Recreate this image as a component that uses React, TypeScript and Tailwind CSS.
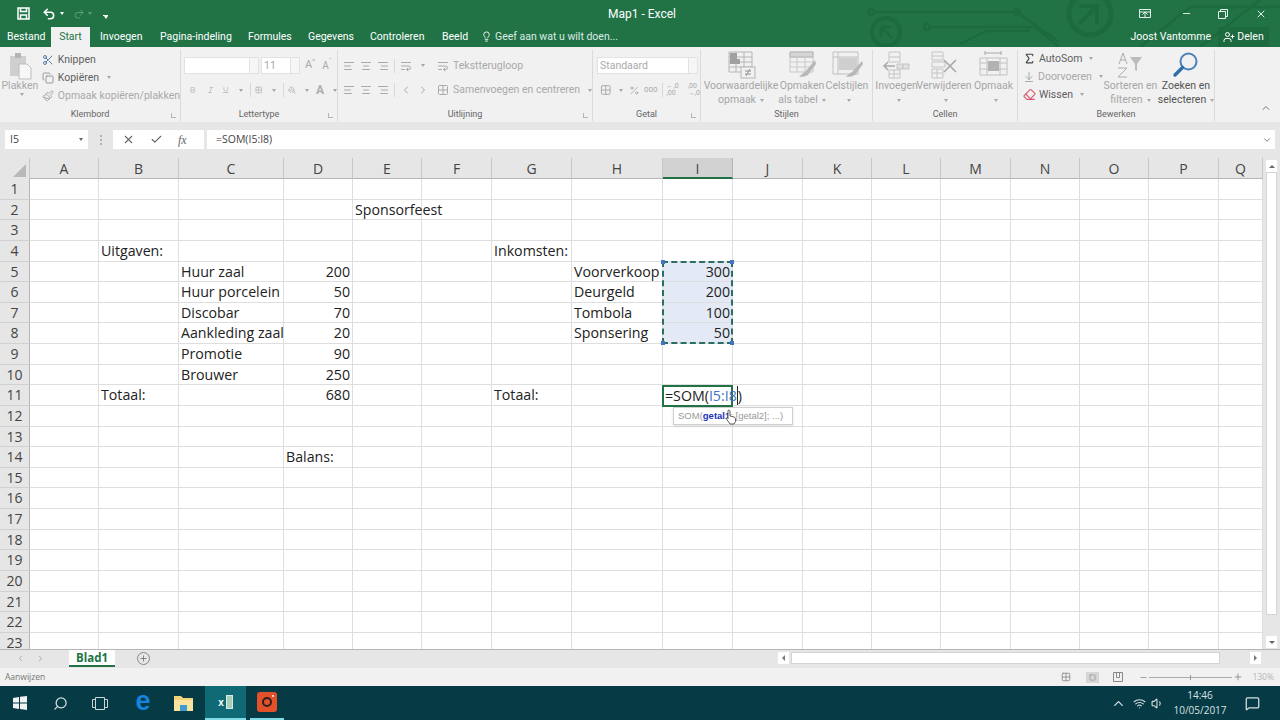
import React from "react"
import { Scissors, Copy, Paintbrush, X, Check, ChevronDown, ChevronUp, Plus, Search, Lightbulb, Minus, Square, Wifi, Volume1, MessageSquare, Bold, Italic, Underline, Sigma, ArrowDownToLine, Eraser, UserPlus, Undo2, Redo2, ChevronLeft, ChevronRight, Grid2x2, PaintBucket, AlignLeft, AlignCenter, AlignRight, WrapText, Percent } from "lucide-react"

const COLS = ["A", "B", "C", "D", "E", "F", "G", "H", "I", "J", "K", "L", "M", "N", "O", "P", "Q"]

// celinhoud: [tekst, rechts uitgelijnd]
const CELLS: Record<string, [string, boolean?]> = {
  E2: ["Sponsorfeest"],
  B4: ["Uitgaven:"], G4: ["Inkomsten:"],
  C5: ["Huur zaal"], D5: ["200", true], H5: ["Voorverkoop"], I5: ["300", true],
  C6: ["Huur porcelein"], D6: ["50", true], H6: ["Deurgeld"], I6: ["200", true],
  C7: ["Discobar"], D7: ["70", true], H7: ["Tombola"], I7: ["100", true],
  C8: ["Aankleding zaal"], D8: ["20", true], H8: ["Sponsering"], I8: ["50", true],
  C9: ["Promotie"], D9: ["90", true],
  C10: ["Brouwer"], D10: ["250", true],
  B11: ["Totaal:"], D11: ["680", true], G11: ["Totaal:"],
  D14: ["Balans:"],
}

const ROWS = Array.from({ length: 23 }, (_, i) => i + 1)

function TableIcon({ kind }: { kind: string }) {
  // grote lintpictogrammen, lichtgrijs want uitgeschakeld
  return (
    <svg width="34" height="30" viewBox="0 0 34 30" fill="none" stroke="#b5b5b5" strokeWidth="1">
      {kind === "cond" && (
        <>
          <path d="M5 2h23v20H5zM5 7h23M5 12h23M5 17h23M12 2v20M20 2v20" />
          <path d="M6 3h7v6H6zM6 9h10v5H6z" fill="#a0a0a0" stroke="none" />
          <rect x="17" y="17" width="14" height="11" fill="#f1f1f1" />
          <path d="M21 21h6M21 24h6M26 19l-4 7" stroke="#909090" />
        </>
      )}
      {kind === "tabel" && (
        <>
          <path d="M5 2h23v20H5zM5 7h23M5 12h23M5 17h23M12 2v20M20 2v20" stroke="#c8c8c8" />
          <path d="M5 2h23v5H5z" fill="#d5d5d5" />
          <path d="M30 10L20 22l3 3 8-11zM20 22c-3 1-4 3-6 5 4 0 7-1 9-2z" fill="#b8b8b8" stroke="none" />
        </>
      )}
      {kind === "cel" && (
        <>
          <path d="M3 2h25v22H3zM3 7h25M8 2v22" stroke="#c0c0c0" />
          <rect x="9" y="8" width="18" height="12" fill="#cfcfcf" stroke="none" />
          <path d="M32 11L22 22l3 3 8-11zM22 22c-3 1-4 3-6 5 4 0 7-1 9-2z" fill="#b8b8b8" stroke="none" />
        </>
      )}
      {kind === "invoegen" && (
        <>
          <path d="M9 2h11v10H9zM9 7h11M9 20h11v8H9zM14 20v8M9 24h11" stroke="#c4c4c4" />
          <path d="M17 14h12v5H17zM23 14v5" stroke="#c4c4c4" fill="#e0e0e0" />
          <path d="M15 16H4M8 12l-4 4 4 4" stroke="#aaa" strokeWidth="1.5" />
        </>
      )}
      {kind === "verwijderen" && (
        <>
          <path d="M5 2h11v8H5zM5 6h11M5 19h11v9H5zM10 19v9M5 23h11M5 12h13v5H5z" stroke="#c4c4c4" />
          <path d="M17 10l12 12M29 10L17 22" stroke="#a8a8a8" strokeWidth="1.6" />
        </>
      )}
      {kind === "opmaak" && (
        <>
          <path d="M3 8h27v17H3zM3 13h27M3 19h27M10 8v17M23 8v17" stroke="#c0c0c0" />
          <rect x="11" y="11" width="11" height="10" fill="#b2b2b2" stroke="none" />
          <path d="M8 3h16M8 1v4M24 1v4" stroke="#a8a8a8" />
        </>
      )}
    </svg>
  )
}

function Tiny() {
  return <span className="inline-block w-0 h-0 border-x-[2.5px] border-x-transparent border-t-[3px] border-t-[#a8a8a8] ml-[4px] align-middle" />
}

function LargeBtn({ kind, l1, l2, w }: { kind: string; l1: string; l2: string; w: string }) {
  return (
    <div className={`${w} flex flex-col items-center text-[10.5px] leading-[14px] text-[#a6a6a6]`}>
      <div className="h-[29px] flex items-center justify-center">
        <TableIcon kind={kind} />
      </div>
      <span className="whitespace-nowrap">{l1}</span>
      <span className="whitespace-nowrap">{l2}<Tiny /></span>
    </div>
  )
}

function Group({ label, w, launcher, children }: { label: string; w: string; launcher?: boolean; children: React.ReactNode }) {
  return (
    <div className={`${w} h-[71px] shrink-0 flex flex-col border-r border-[#dadada] relative`}>
      <div className="flex-1 min-h-0">{children}</div>
      <div className="h-[14px] text-center text-[9px] leading-[14px] text-[#666666]">{label}</div>
      {launcher && <div className="absolute right-[4px] bottom-[3px] w-[5px] h-[5px] border-l border-b border-[#b4b4b4]" />}
    </div>
  )
}

function Ribbon() {
  return (
    <div className="h-[75px] bg-[#f1f1f1] flex pt-[3px] text-[10.5px] text-[#a9a9a9] font-['Roboto',sans-serif] shrink-0">
      <Group label="Klembord" w="w-[181px]" launcher>
        <div className="flex">
          <div className="w-[40px] flex flex-col items-center">
            <svg width="24" height="28" viewBox="0 0 24 28" className="mt-[2px]">
              <path d="M2 4h16v20H2z" fill="#cfcfcf" />
              <path d="M7 1h6v5H7z" fill="#b5b5b5" />
              <path d="M11 12h8l4 4v11H11z" fill="#f7f7f7" stroke="#bdbdbd" />
            </svg>
            <span className="leading-[14px] -mt-[1px]">Plakken</span>
            <Tiny />
          </div>
          <div className="flex flex-col pl-[2px] pt-[2px] text-[#5f5f5f] gap-[3px]">
            <div className="flex items-center h-[15px] gap-[4px]"><Scissors size={12} className="text-[#5b7fa8]" /><span>Knippen</span></div>
            <div className="flex items-center h-[15px] gap-[4px]"><Copy size={12} className="text-[#9a9a9a]" /><span>Kopiëren</span><Tiny /></div>
            <div className="flex items-center h-[16px] gap-[4px] text-[#a9a9a9]"><Paintbrush size={12} /><span className="whitespace-nowrap">Opmaak kopiëren/plakken</span></div>
          </div>
        </div>
      </Group>

      <Group label="Lettertype" w="w-[157px]" launcher>
        <div className="pl-[3px] pt-[7px]">
          <div className="flex items-center h-[17px]">
            <div className="w-[66px] h-[17px] bg-white border border-[#e2e2e2]" />
            <div className="w-[9px] h-[17px] bg-[#f6f6f6] border-y border-r border-[#e2e2e2]" />
            <div className="w-[30px] h-[17px] ml-[2px] bg-white border border-[#e2e2e2] leading-[15px] pl-[2px]">11</div>
            <div className="w-[9px] h-[17px] bg-[#f6f6f6] border-y border-r border-[#e2e2e2]" />
            <span className="ml-[5px] text-[11px]">A</span><span className="text-[7px] -mt-[6px]">^</span>
            <span className="ml-[7px] text-[10px]">A</span><span className="text-[7px] -mt-[6px]">ˇ</span>
          </div>
          <div className="flex items-center h-[16px] mt-[8px] pl-[5px] gap-[5px] text-[#adadad]">
            <Bold size={12} /><Italic size={12} className="ml-[5px]" /><Underline size={12} className="ml-[3px]" /><Tiny />
            <span className="w-px h-[14px] bg-[#d8d8d8] ml-[2px]" />
            <Grid2x2 size={12} /><Tiny />
            <span className="w-px h-[14px] bg-[#d8d8d8] ml-[2px]" />
            <PaintBucket size={12} /><Tiny />
            <span className="font-bold text-[12px] ml-[2px]">A</span><Tiny />
          </div>
        </div>
      </Group>

      <Group label="Uitlijning" w="w-[255px]" launcher>
        <div className="flex pl-[3px] pt-[7px]">
          <div className="w-[92px] flex flex-col">
            <div className="flex items-center h-[17px] gap-[5px] pl-[2px]">
              <AlignLeft size={12} /><AlignCenter size={12} /><AlignRight size={12} />
              <span className="w-px h-[14px] bg-[#d8d8d8]" />
              <WrapText size={12} /><Tiny />
            </div>
            <div className="flex items-center h-[16px] gap-[5px] pl-[2px] mt-[8px]">
              <AlignLeft size={12} /><AlignCenter size={12} /><AlignRight size={12} />
              <span className="w-px h-[14px] bg-[#d8d8d8]" />
              <ChevronLeft size={12} /><ChevronRight size={12} />
            </div>
          </div>
          <div className="flex flex-col">
            <div className="flex items-center h-[17px] gap-[4px] pl-[8px]"><WrapText size={12} /><span className="whitespace-nowrap">Tekstterugloop</span></div>
            <div className="flex items-center h-[16px] gap-[4px] pl-[8px] mt-[8px]"><Grid2x2 size={12} /><span className="whitespace-nowrap">Samenvoegen en centreren</span><Tiny /></div>
          </div>
        </div>
      </Group>

      <Group label="Getal" w="w-[108px]" launcher>
        <div className="pl-[4px] pt-[7px]">
          <div className="w-[101px] h-[17px] bg-white border border-[#e2e2e2] leading-[15px] pl-[2px] flex justify-between">
            Standaard<span className="w-[9px] bg-[#f6f6f6] border-l border-[#e2e2e2]" />
          </div>
          <div className="flex items-center h-[16px] mt-[8px] pl-[3px] gap-[4px]">
            <Grid2x2 size={12} /><Tiny />
            <Percent size={11} className="ml-[2px]" />
            <span className="text-[8px]">000</span>
            <span className="w-px h-[14px] bg-[#d8d8d8]" />
            <span className="text-[7px] leading-[7px] w-[18px]">←,0<br />,00</span>
            <span className="text-[7px] leading-[7px]">,00<br />→,0</span>
          </div>
        </div>
      </Group>

      <Group label="Stijlen" w="w-[172px]">
        <div className="flex pl-[2px]">
          <LargeBtn kind="cond" l1="Voorwaardelijke" l2="opmaak" w="w-[76px]" />
          <LargeBtn kind="tabel" l1="Opmaken" l2="als tabel" w="w-[46px]" />
          <LargeBtn kind="cel" l1="Celstijlen" l2="" w="w-[44px]" />
        </div>
      </Group>

      <Group label="Cellen" w="w-[145px]">
        <div className="flex pl-[2px]">
          <LargeBtn kind="invoegen" l1="Invoegen" l2="" w="w-[44px]" />
          <LargeBtn kind="verwijderen" l1="Verwijderen" l2="" w="w-[52px]" />
          <LargeBtn kind="opmaak" l1="Opmaak" l2="" w="w-[48px]" />
        </div>
      </Group>

      <Group label="Bewerken" w="w-[197px]">
        <div className="flex pl-[5px]">
          <div className="w-[80px] flex flex-col pt-[1px] gap-[3px] text-[#5f5f5f]">
            <div className="flex items-center h-[15px] gap-[3px]"><Sigma size={13} className="text-[#444]" /><span>AutoSom</span><Tiny /></div>
            <div className="flex items-center h-[15px] gap-[3px] text-[#a9a9a9]"><ArrowDownToLine size={12} /><span>Doorvoeren</span><Tiny /></div>
            <div className="flex items-center h-[15px] gap-[3px]"><Eraser size={13} className="text-[#d9566e]" /><span>Wissen</span><Tiny /></div>
          </div>
          <div className="w-[56px] flex flex-col items-center leading-[14px] text-[#a6a6a6]">
            <div className="h-[29px] flex items-center justify-center">
              <svg width="30" height="28" viewBox="0 0 30 28" fill="none" stroke="#adadad">
                <path d="M4 13l4-11 4 11M5.500 9h5M3 17h9l-9 9h9" />
                <path d="M15 6h12l-5 7v7l-2-1v-6z" fill="#bcbcbc" stroke="none" />
              </svg>
            </div>
            <span className="whitespace-nowrap">Sorteren en</span>
            <span className="whitespace-nowrap">filteren<Tiny /></span>
          </div>
          <div className="w-[56px] flex flex-col items-center leading-[14px] text-[#555555]">
            <div className="h-[29px] flex items-center justify-center">
              <svg width="28" height="28" viewBox="0 0 28 28" fill="none">
                <circle cx="16.500" cy="10.500" r="8" stroke="#4a7fb8" strokeWidth="2" />
                <path d="M10.500 16.500L3 24" stroke="#2f6cab" strokeWidth="3.400" strokeLinecap="round" />
              </svg>
            </div>
            <span className="whitespace-nowrap">Zoeken en</span>
            <span className="whitespace-nowrap">selecteren<Tiny /></span>
          </div>
        </div>
      </Group>

      <div className="flex-1 flex items-end justify-end pr-[8px] pb-[8px]">
        <ChevronUp size={12} className="text-[#777]" />
      </div>
    </div>
  )
}

function TitleBar() {
  return (
    <div className="h-[47px] bg-[#217346] relative text-white shrink-0 overflow-hidden font-['Roboto',sans-serif]">
      {/* printplaat-motief van het Office-thema */}
      <svg width="430" height="47" viewBox="0 0 430 47" fill="none" stroke="#1c6a3f" strokeWidth="2.400" className="absolute right-0 top-0">
        <circle cx="21" cy="12" r="3" />
        <path d="M24 12h143l42 30" />
        <circle cx="167" cy="12" r="3" />
        <circle cx="77" cy="27" r="3" />
        <path d="M80 27h105l24 20M110 44l26-13h44" />
        <circle cx="36" cy="32" r="14" strokeWidth="4" />
        <path d="M31 27h10M31 27v10M32 28l10 10" strokeWidth="3" />
        <circle cx="240" cy="14" r="21" strokeWidth="5" />
        <path d="M230 5h18v18M248 5l-18 18" strokeWidth="4" transform="translate(-1 1)" />
        <path d="M290 47l50-40h90M350 47L410 0" />
      </svg>
      <div className="relative h-[27px] flex items-center">
        <div className="flex-1 flex items-center pl-[17px]">
          <svg width="13" height="13" viewBox="0 0 13 13" fill="none" stroke="#fff" strokeWidth="1.500">
            <path d="M1 1h11v11H1zM3.500 1v3.500h6V1M3.500 12V8h6v4" />
          </svg>
          <Undo2 size={14} className="ml-[12px]" strokeWidth={2.600} />
          <span className="w-0 h-0 border-x-[2px] border-x-transparent border-t-[3px] border-t-white ml-[4px]" />
          <Redo2 size={12} className="ml-[9px] text-[#5d9c79]" />
          <span className="w-0 h-0 border-x-[2px] border-x-transparent border-t-[3px] border-t-[#5d9c79] ml-[3px]" />
          <span className="w-[5px] h-[5px] border-b border-white ml-[11px] relative">
            <span className="absolute left-[.5px] top-[5px] w-0 h-0 border-x-[2px] border-x-transparent border-t-[3px] border-t-white" />
          </span>
        </div>
        <div className="text-[12px]">Map1 - Excel</div>
        <div className="flex-1 flex items-center justify-end pr-[13px] text-[#e8f2ec]">
          <svg width="12" height="10" viewBox="0 0 12 10" fill="none" stroke="currentColor" className="mr-[30px]">
            <path d="M.5.5h11v8H.5zM.5 3h11M6 3v5.500M3.500 5.500L6 3l2.500 2.500" />
          </svg>
          <Minus size={11} className="mr-[26px]" />
          <svg width="10" height="10" viewBox="0 0 10 10" fill="none" stroke="currentColor" className="mr-[27px]">
            <path d="M.5 2.500h7v7h-7zM2.500 2.500v-2h7v7h-2" />
          </svg>
          <X size={12} />
        </div>
      </div>
      <div className="relative h-[20px] flex items-end text-[10.5px] leading-[20px] whitespace-nowrap">
        <span className="ml-[7px] w-[35px]">Bestand</span>
        <span className="ml-[9px] w-[39px] bg-[#f1f1f1] text-[#217346] text-center">Start</span>
        <span className="ml-[10px] w-[41px]">Invoegen</span>
        <span className="ml-[19px] w-[69px]">Pagina-indeling</span>
        <span className="ml-[19px] w-[41px]">Formules</span>
        <span className="ml-[19px] w-[43px]">Gegevens</span>
        <span className="ml-[19px] w-[52px]">Controleren</span>
        <span className="ml-[20px] w-[24px]">Beeld</span>
        <Lightbulb size={11} className="ml-[15px] mb-[5px]" />
        <span className="ml-[3px] text-[#dcebe3]">Geef aan wat u wilt doen...</span>
        <div className="ml-auto flex items-center">
          <span>Joost Vantomme</span>
          <div className="ml-[7px] mr-[11px] w-[51px] h-[20px] bg-[#1d6a40] flex items-center justify-center gap-[2px]">
            <UserPlus size={12} />Delen
          </div>
        </div>
      </div>
    </div>
  )
}

function FormulaBar() {
  return (
    <div className="h-[36px] bg-[#e6e6e6] flex items-start pt-[8px] pl-[5px] pr-[5px] text-[10.5px] text-[#444444] shrink-0">
      <div className="w-[83px] h-[19px] bg-white flex items-center justify-between px-[5px]">
        I5
        <span className="w-0 h-0 border-x-[2.5px] border-x-transparent border-t-[3px] border-t-[#666]" />
      </div>
      <div className="w-[25px] h-[19px] flex flex-col items-center justify-center gap-[2px]">
        <span className="w-[2px] h-[2px] bg-[#b0b0b0]" /><span className="w-[2px] h-[2px] bg-[#b0b0b0]" /><span className="w-[2px] h-[2px] bg-[#b0b0b0]" />
      </div>
      <div className="w-[91px] h-[19px] bg-white flex items-center pl-[9px] gap-[15px] text-[#666]">
        <X size={13} />
        <Check size={13} />
        <span className="font-['Liberation_Serif',serif] italic text-[12px] leading-none">fx</span>
      </div>
      <div className="flex-1 ml-[3px] h-[19px] bg-white flex items-center justify-between pl-[9px] pr-[3px]">
        =SOM(I5:I8)
        <ChevronDown size={10} className="text-[#666]" />
      </div>
    </div>
  )
}

function Sheet() {
  return (
    <div className="flex-1 min-h-0 flex bg-white">
      <div className="flex-1 min-w-0 overflow-hidden relative">
        <div className="grid grid-cols-[30px_69px_80px_105px_69px_69px_70px_80px_91px_70px_70px_69px_69px_70px_69px_69px_70px_44px] grid-rows-[21px_repeat(23,20.64px)]">
          <div className="bg-[#e6e6e6] border-r border-[#c6c6c6] relative">
            <span className="absolute right-[3px] bottom-[2px] w-0 h-0 border-l-[13px] border-l-transparent border-b-[13px] border-b-[#b9b9b9]" />
          </div>
          {COLS.map((c) => (
            <div
              key={c}
              className={
                c === "I"
                  ? "bg-[#d2d2d2] border-b-2 border-[#217346] border-r border-r-[#b5b5b5] text-center text-[14px] leading-[21px] text-[#444]"
                  : "bg-[#e6e6e6] border-b border-[#b5b5b5] border-r border-r-[#c6c6c6] text-center text-[14px] leading-[21px] text-[#444]"
              }
            >
              {c}
            </div>
          ))}
          {ROWS.map((r) => (
            <React.Fragment key={r}>
              <div className="bg-[#e6e6e6] border-r border-[#b5b5b5] border-b border-b-[#d0d0d0] text-center text-[14px] leading-[20px] text-[#444]">{r}</div>
              {COLS.map((c) => {
                const cell = CELLS[`${c}${r}`]
                const sel = c === "I" && r >= 5 && r <= 8
                return (
                  <div
                    key={c}
                    className={`border-r border-b border-[#dedede] text-[14.2px] leading-[19px] text-[#222] whitespace-nowrap px-[2px] ${sel ? "bg-[#e3eaf5]" : ""} ${cell?.[1] ? "text-right" : ""}`}
                  >
                    {cell?.[0]}
                  </div>
                )
              })}
            </React.Fragment>
          ))}
        </div>

        {/* bereik I5:I8 met lopende rand */}
        <div className="absolute left-[662px] top-[103px] w-[71px] h-[83px] border-2 border-dashed border-[#2b6f62]">
          <span className="absolute -left-[3px] -top-[3px] w-[4px] h-[4px] bg-[#4472c4]" />
          <span className="absolute -right-[3px] -top-[3px] w-[4px] h-[4px] bg-[#4472c4]" />
          <span className="absolute -left-[3px] -bottom-[3px] w-[4px] h-[4px] bg-[#4472c4]" />
          <span className="absolute -right-[3px] -bottom-[3px] w-[4px] h-[4px] bg-[#4472c4]" />
        </div>

        {/* actieve cel I11 */}
        <div className="absolute left-[662px] top-[227px] w-[71px] h-[22px] border-2 border-[#217346] bg-white text-[14.2px] leading-[18px] text-[#222] pl-[1px] whitespace-nowrap">
          =SOM(<span className="text-[#4472c4]">I5:I8</span><span className="border-r border-[#222]" />)
        </div>

        {/* functie-tooltip */}
        <div className="absolute left-[673px] top-[249px] w-[120px] h-[18px] bg-white border border-[#d0d0d0] shadow-sm text-[9.5px] leading-[16px] text-[#999] pl-[4px] whitespace-nowrap font-['Liberation_Sans',sans-serif]">
          SOM(<b className="text-[#2233bb]">getal1</b>; [getal2]; ...)
        </div>
        <svg width="12" height="16" viewBox="0 0 12 16" className="absolute left-[725px] top-[251px]">
          <path d="M3 1.500c1-1 2 0 2 1V7l4 1c1 .3 1.500 1 1.500 2v2.500L9 15H5L1.500 10c-.5-1 .5-2 1.500-1L3 9.500z" fill="#fff" stroke="#333" strokeWidth="0.800" />
        </svg>
      </div>

      <div className="w-[17px] shrink-0 bg-[#e6e6e6] flex flex-col items-center pt-[2px] pb-[1px]">
        <div className="w-[11px] h-[12px] bg-white flex items-center justify-center">
          <span className="w-0 h-0 border-x-[3px] border-x-transparent border-b-[3px] border-b-[#666]" />
        </div>
        <div className="w-[11px] h-[443px] bg-white border border-[#d4d4d4]" />
        <div className="flex-1" />
        <div className="w-[11px] h-[12px] bg-white flex items-center justify-center">
          <span className="w-0 h-0 border-x-[3px] border-x-transparent border-t-[3px] border-t-[#666]" />
        </div>
      </div>
    </div>
  )
}

function SheetTabs() {
  return (
    <div className="h-[19px] bg-[#e6e6e6] border-t border-[#b5b5b5] flex items-start shrink-0 text-[#999]">
      <ChevronLeft size={9} className="ml-[16px] mt-[4px]" />
      <ChevronRight size={9} className="ml-[11px] mt-[4px]" />
      <div className="ml-[24px] w-[46px] h-[17px] bg-white border-b-2 border-[#217346] text-center text-[11.5px] leading-[15px] font-bold text-[#217346]">Blad1</div>
      <div className="ml-[22px] mt-[2px] w-[13px] h-[13px] rounded-full border border-[#888] flex items-center justify-center text-[#666]">
        <Plus size={9} />
      </div>
      <div className="ml-[628px] mt-[2px] w-[11px] h-[12px] bg-white flex items-center justify-center">
        <span className="w-0 h-0 border-y-[3px] border-y-transparent border-r-[3px] border-r-[#777]" />
      </div>
      <div className="mt-[2px] ml-[2px] w-[429px] h-[12px] bg-white border border-[#d4d4d4]" />
      <div className="ml-[30px] mt-[2px] w-[11px] h-[12px] bg-white flex items-center justify-center">
        <span className="w-0 h-0 border-y-[3px] border-y-transparent border-l-[3px] border-l-[#777]" />
      </div>
    </div>
  )
}

function StatusBar() {
  return (
    <div className="h-[18px] bg-[#f1f1f1] flex items-center text-[#777] text-[8.5px] shrink-0 pl-[5px] pr-[6px]">
      <span>Aanwijzen</span>
      <div className="ml-auto flex items-center text-[#888]">
        <Grid2x2 size={10} />
        <span className="ml-[15px] w-[13px] h-[11px] bg-[#d6d6d6] flex items-center justify-center"><Square size={7} /></span>
        <svg width="10" height="10" viewBox="0 0 10 10" fill="none" stroke="currentColor" className="ml-[14px]"><path d="M.5.5h9v9h-9zM3.500.5v5h3v-5" /></svg>
        <Minus size={9} className="ml-[16px]" />
        <div className="w-[83px] h-px bg-[#aaa] ml-[1px] flex justify-center"><span className="w-px h-[5px] -mt-[2px] bg-[#999]" /></div>
        <Plus size={10} className="ml-[1px]" />
        <span className="ml-[9px] text-[#b5b5b5] text-[8.5px]">130%</span>
      </div>
    </div>
  )
}

function Taskbar() {
  return (
    <div className="h-[34px] bg-[#063a45] flex items-stretch text-white shrink-0">
      <div className="w-[40px] flex items-center justify-center">
        <svg width="14" height="14" viewBox="0 0 14 14" fill="#f2f2f2"><path d="M0 2l6-1v5.500H0zM7 .8L14 0v6.500H7zM0 7.500h6V13l-6-1zM7 7.500h7V14l-7-1z" /></svg>
      </div>
      <div className="w-[40px] flex items-center justify-center"><Search size={15} className="-scale-x-100 text-[#d8e2e4]" /></div>
      <div className="w-[40px] flex items-center justify-center">
        <svg width="16" height="13" viewBox="0 0 16 13" fill="none" stroke="#c8d4d6"><path d="M3.500.5h9v12h-9zM3.500 2.500h-3v8h3M12.500 2.500h3v8h-3" /></svg>
      </div>
      <div className="w-[43px] flex items-center justify-center pl-[3px]">
        <span className="text-[#1684de] font-bold text-[27px] leading-none font-['Liberation_Sans',sans-serif] -mt-[4px]">e</span>
      </div>
      <div className="w-[40px] flex items-center justify-center">
        <svg width="19" height="16" viewBox="0 0 19 16"><path d="M0 1h7l2 2h10v13H0z" fill="#f2d27a" /><path d="M0 5h19v11H0z" fill="#fae39c" /><path d="M6 10h7v6H6z" fill="#3e9bd2" /></svg>
      </div>
      <div className="ml-[2px] w-[41px] bg-[#0f6a75] border-b-2 border-[#7fdbe6] flex items-center justify-center">
        <span className="font-bold text-[10px] font-['Liberation_Sans',sans-serif]">x</span>
        <span className="ml-[2px] w-[7px] h-[14px] border border-[#d8ece6] bg-[#a8cdb8]" />
      </div>
      <div className="ml-[4px] w-[34px] border-b-2 border-[#7fdbe6] flex items-center justify-center">
        <span className="w-[20px] h-[20px] rounded-[3px] bg-[#e4502a] flex items-center justify-center relative">
          <span className="w-[10px] h-[10px] rounded-full border-2 border-[#2b2020]" />
          <span className="absolute right-[3px] top-[3px] w-[2px] h-[2px] rounded-full bg-white" />
        </span>
      </div>
      <div className="ml-auto flex items-center text-[#d8e2e4]">
        <ChevronUp size={15} />
        <Wifi size={13} className="ml-[7px]" />
        <Volume1 size={13} className="ml-[5px]" />
        <div className="ml-[8px] w-[56px] flex flex-col items-center text-[10px] leading-[15px]">
          <span>14:46</span>
          <span>10/05/2017</span>
        </div>
        <MessageSquare size={15} className="ml-[17px] mr-[20px]" />
      </div>
    </div>
  )
}

export default function App() {
  return (
    <div className="w-[1280px] h-[720px] overflow-hidden flex flex-col font-['Open_Sans',sans-serif]">
      <TitleBar />
      <Ribbon />
      <FormulaBar />
      <Sheet />
      <SheetTabs />
      <StatusBar />
      <Taskbar />
    </div>
  )
}
